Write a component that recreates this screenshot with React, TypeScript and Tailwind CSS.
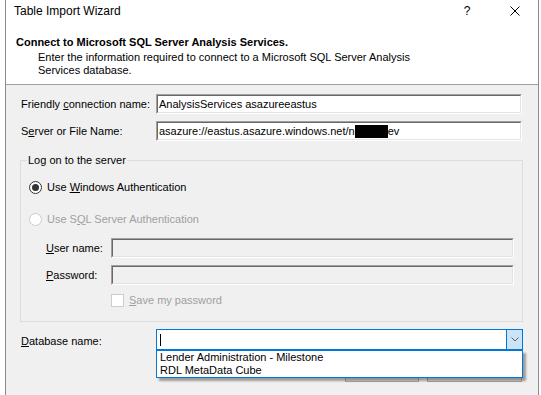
import React from "react";

function Sunken({ className, disabled, children }: { className: string; disabled?: boolean; children?: React.ReactNode }) {
  return (
    <div className={`${className} h-[20px] border border-t-[#a0a0a0] border-l-[#a0a0a0] border-b-white border-r-white`}>
      <div
        className={`h-full border border-t-[#696969] border-l-[#696969] border-b-[#e3e3e3] border-r-[#e3e3e3] flex items-center pl-[1px] ${
          disabled ? "bg-[#f0f0f0]" : "bg-white"
        }`}
      >
        {children}
      </div>
    </div>
  );
}

export default function App() {
  return (
    <div className="w-[541px] h-[395px] overflow-hidden bg-white font-['Liberation_Sans',Arial,sans-serif] text-[11px] leading-[13px] text-black">
      <div className="ml-[5px] w-[534px] h-full border-x border-[#8a8a8a] flex flex-col">
        {/* header */}
        <div className="h-[85px] shrink-0 bg-white border-b border-[#a0a0a0]">
          <div className="h-[22px] flex items-center pl-[8px] text-[12px] leading-[14px]">
            <span>Table Import Wizard</span>
            <span className="ml-auto w-[46px] flex justify-center pr-[4px] text-[12px]">?</span>
            <span className="w-[46px] flex justify-center">
              <svg width="10" height="10" viewBox="0 0 10 10">
                <path d="M0.5 0.5 L9.5 9.5 M9.5 0.5 L0.5 9.5" stroke="#000" strokeWidth="1" fill="none" />
              </svg>
            </span>
          </div>
          <div className="mt-[14px] pl-[10px] font-bold">Connect to Microsoft SQL Server Analysis Services.</div>
          <div className="mt-[2px] pl-[32px] w-[420px]">
            Enter the information required to connect to a Microsoft SQL Server Analysis
            <br />
            Services database.
          </div>
        </div>

        {/* body */}
        <div className="flex-1 bg-[#f0f0f0] pt-[9px]">
          <div className="flex items-center pl-[15px]">
            <span className="w-[135px]">
              Friendly <u className="underline-offset-[1px]">c</u>onnection name:
            </span>
            <Sunken className="w-[366px]">
              <span>AnalysisServices asazureeastus</span>
            </Sunken>
          </div>
          <div className="flex items-center pl-[15px] mt-[7px]">
            <span className="w-[135px]">
              S<u className="underline-offset-[1px]">e</u>rver or File Name:
            </span>
            <Sunken className="w-[366px]">
              <span>asazure://eastus.asazure.windows.net/n</span>
              <span className="inline-block w-[33px] h-[13px] bg-black"></span>
              <span>ev</span>
            </Sunken>
          </div>

          <fieldset className="ml-[14px] mt-[13px] w-[503px] border border-[#dcdcdc] pb-[14px]">
            <legend className="ml-[6px] px-[1px]">Log on to the server</legend>
            <div className="h-[40px] flex items-center pl-[8px]">
              <span className="w-[13px] h-[13px] rounded-full border border-[#333333] bg-white flex items-center justify-center">
                <span className="w-[7px] h-[7px] rounded-full bg-[#333333]"></span>
              </span>
              <span className="ml-[5px]">
                Use <u className="underline-offset-[1px]">W</u>indows Authentication
              </span>
            </div>
            <div className="h-[24px] flex items-center pl-[8px] text-[#a0a0a0]">
              <span className="w-[13px] h-[13px] rounded-full border border-[#cccccc] bg-white"></span>
              <span className="ml-[5px]">
                Use S<u className="underline-offset-[1px]">Q</u>L Server Authentication
              </span>
            </div>
            <div className="mt-[7px] flex items-center pl-[25px]">
              <span className="w-[65px]">
                <u className="underline-offset-[1px]">U</u>ser name:
              </span>
              <Sunken className="w-[403px]" disabled />
            </div>
            <div className="mt-[7px] flex items-center pl-[25px]">
              <span className="w-[65px]">
                <u className="underline-offset-[1px]">P</u>assword:
              </span>
              <Sunken className="w-[403px]" disabled />
            </div>
            <div className="mt-[9px] h-[13px] flex items-center pl-[90px] text-[#a0a0a0]">
              <span className="w-[13px] h-[13px] border border-[#cccccc] bg-white"></span>
              <span className="ml-[5px]">
                <u className="underline-offset-[1px]">S</u>ave my password
              </span>
            </div>
          </fieldset>

          <div className="mt-[7px] flex items-center pl-[15px]">
            <span className="w-[135px] pt-[3px]">
              <u className="underline-offset-[1px]">D</u>atabase name:
            </span>
            <div className="relative w-[367px] h-[21px]">
              <div className="h-full border border-[#0078d7] bg-white flex items-stretch">
                <div className="flex items-center pl-[3px]">
                  <span className="w-[1px] h-[12px] bg-black"></span>
                </div>
                <div className="ml-auto w-[16px] bg-[#cce4f7] border-l border-[#0078d7] flex items-center justify-center">
                  <svg width="8" height="5" viewBox="0 0 8 5">
                    <path d="M0.5 0.5 L4 4 L7.5 0.5" stroke="#606060" strokeWidth="1" fill="none" />
                  </svg>
                </div>
              </div>
              <div className="absolute left-0 top-full w-full z-10 border border-[#0078d7] bg-white shadow-[3px_3px_2px_rgba(0,0,0,0.35)]">
                <div className="pl-[3px] h-[13px]">Lender Administration - Milestone</div>
                <div className="pl-[3px] h-[13px]">RDL MetaData Cube</div>
              </div>
            </div>
          </div>

          <div className="mt-[9px] flex justify-end gap-[8px] pr-[16px]">
            <div className="w-[74px] h-[23px] bg-[#e1e1e1] border border-[#adadad] overflow-hidden whitespace-nowrap flex items-start justify-center pt-[2px]">
              Test Connection
            </div>
            <div className="w-[95px] h-[23px] bg-[#e1e1e1] border border-[#adadad] overflow-hidden whitespace-nowrap flex items-start justify-center pt-[2px]">
              Advanced...
            </div>
          </div>
        </div>
      </div>
    </div>
  );
}
